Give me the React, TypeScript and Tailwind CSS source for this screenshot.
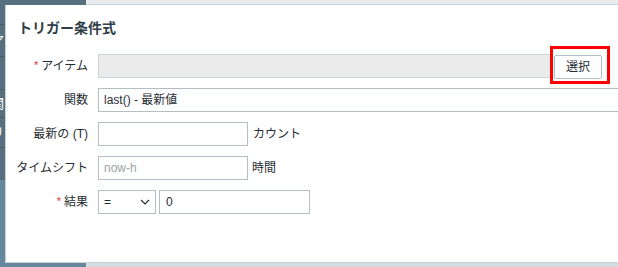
import React from 'react'

const font = { fontFamily: '"Liberation Sans", "Noto Sans CJK JP", Arial, sans-serif' }

const Label = ({ children, required }: { children: React.ReactNode; required?: boolean }) => (
  <div className="w-[83px] shrink-0 text-right text-[12px] text-[#1f2c33] pr-[1px]">
    {required && <span className="text-[#e33734] mr-[3px] text-[11px] align-top">*</span>}
    {children}
  </div>
)

export default function App() {
  return (
    <div className="relative w-[618px] h-[267px] overflow-hidden bg-[#d5dce0]" style={font}>
      {/* background page */}
      <div className="absolute left-0 top-0 w-[86px] h-full bg-[#67879e]">
        <div className="h-[180px] bg-[#56707f] flex flex-col">
          <div className="h-[25px] border-b border-[#4a606d]" />
          <div className="h-[32px] border-b border-[#4a606d] text-white text-[13px] leading-[32px] -ml-[9px]">ア</div>
          <div className="h-[33px] border-b border-[#4a606d]" />
          <div className="h-[28px] border-b border-[#4a606d] text-white text-[13px] leading-[28px] -ml-[9px]">関</div>
          <div className="h-[30px] border-b border-[#4a606d] text-white text-[13px] leading-[30px] -ml-[9px]">リ</div>
        </div>
      </div>
      <div className="absolute left-[86px] top-0 right-0 h-[5px] bg-[#e8ecee] border-b border-[#c9d1d6]" />

      {/* dialog */}
      <div className="absolute left-[5px] top-[5px] w-[640px] h-[258px] bg-white border-l border-b border-[#c9d1d6]">
        <div className="pl-[12px] pt-[14px] text-[14px] font-bold text-[#2f3e48] leading-[18px]">トリガー条件式</div>

        <div className="mt-[17px] flex flex-col gap-[10px]">
          <div className="flex items-center h-[24px]">
            <Label required>アイテム</Label>
            <div className="ml-[9px] w-[453px] h-[24px] bg-[#ebebeb] border border-[#cdd4d8]" />
            <div className="relative ml-[3px]">
              <button className="w-[48px] h-[24px] bg-white border border-[#b3bec4] rounded-[2px] text-[12px] text-[#1f2c33]">
                選択
              </button>
              <div className="absolute -left-[4px] -top-[8px] w-[60px] h-[38px] border-[3px] border-[#ff0000]" />
            </div>
          </div>

          <div className="flex items-center h-[24px]">
            <Label>関数</Label>
            <div className="ml-[9px] w-[540px] h-[24px] border border-[#b3bec4] px-[5px] text-[12px] leading-[22px] text-[#1f2c33]">
              last() - 最新値
            </div>
          </div>

          <div className="flex items-center h-[24px]">
            <Label>最新の (T)</Label>
            <div className="ml-[9px] w-[150px] h-[24px] border border-[#b3bec4]" />
            <span className="ml-[5px] text-[12px] text-[#1f2c33]">カウント</span>
          </div>

          <div className="flex items-center h-[24px]">
            <Label>タイムシフト</Label>
            <div className="ml-[9px] w-[150px] h-[24px] border border-[#b3bec4] px-[5px] text-[12px] leading-[22px] text-[#9aa3a8]">
              now-h
            </div>
            <span className="ml-[4px] text-[12px] text-[#1f2c33]">時間</span>
          </div>

          <div className="flex items-center h-[24px]">
            <Label required>結果</Label>
            <div className="ml-[9px] w-[58px] h-[24px] border border-[#b3bec4] px-[5px] flex items-center justify-between text-[12px] text-[#1f2c33]">
              <span>=</span>
              <svg width="10" height="6" viewBox="0 0 10 6" fill="none" stroke="#1f2c33" strokeWidth="1.1">
                <path d="M1 1l4 4 4-4" />
              </svg>
            </div>
            <div className="ml-[3px] w-[151px] h-[24px] border border-[#b3bec4] px-[6px] text-[12px] leading-[22px] text-[#1f2c33]">
              0
            </div>
          </div>
        </div>
      </div>
    </div>
  )
}
